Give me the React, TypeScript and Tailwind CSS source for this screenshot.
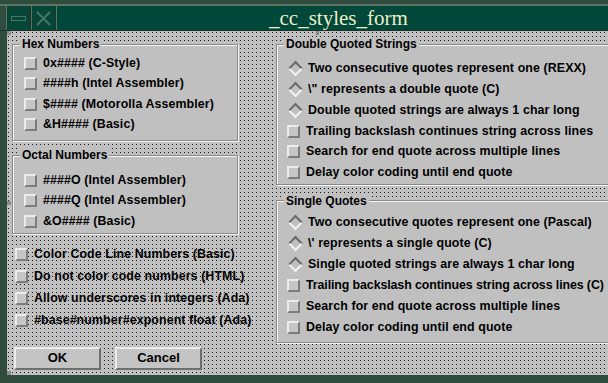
import React from 'react';

const font = { fontFamily: '"Liberation Sans", Arial, sans-serif' };

const Check = () => (
  <span className="block w-[13px] h-[13px] shrink-0 border-2 border-t-[#ececec] border-l-[#ececec] border-r-[#7c7c7c] border-b-[#7c7c7c] bg-[#c6c6c6]" />
);

const Diamond = () => (
  <span className="flex w-[16px] h-[16px] shrink-0 items-center justify-center">
    <span className="block w-[11px] h-[11px] rotate-45 border-2 border-t-[#6a6a6a] border-l-[#6a6a6a] border-r-[#f2f2f2] border-b-[#f2f2f2] bg-[#c0c0c0]" />
  </span>
);

const CheckRow = ({ label, h = 'h-[20.5px]', track = 'tracking-[0.1px]' }: { label: string; h?: string; track?: string }) => (
  <div className={`flex items-center ${h} gap-[6px]`}>
    <Check />
    <span className={`whitespace-nowrap text-[12.4px] ${track}`}>{label}</span>
  </div>
);

const RadioRow = ({ label }: { label: string }) => (
  <div className="flex items-center h-[21px] gap-[5px]">
    <Diamond />
    <span className="whitespace-nowrap text-[12.4px] tracking-[0.1px]">{label}</span>
  </div>
);

const Group = ({ title, className, inner, children }: { title: string; className: string; inner: string; children: React.ReactNode }) => (
  <fieldset className={`border border-[#8a8a8a] bg-[#c0c0c0] shadow-[inset_1px_1px_0_#f4f4f4,1px_1px_0_#f4f4f4] ${className}`}>
    <legend className="ml-[7px] px-[2px] leading-[14px] bg-[#c0c0c0]">{title}</legend>
    <div className={inner}>{children}</div>
  </fieldset>
);

const Button = ({ label }: { label: string }) => (
  <div className="flex w-[87px] h-[23px] items-center justify-center border-2 border-t-[#ececec] border-l-[#ececec] border-r-[#6e6e6e] border-b-[#6e6e6e] bg-[#c4c4c4] text-[13px]">
    {label}
  </div>
);

export default function App() {
  return (
    <div className="w-[608px] h-[383px] overflow-hidden bg-[#2f4c3e] flex flex-col">
      {/* top frame */}
      <div className="h-[6px] shrink-0 border-b-2 border-b-[#5b7567]" />
      {/* title bar */}
      <div className="h-[25px] shrink-0 flex pl-[6px] border-b border-b-[#1d3329]">
        <div className="w-[25px] h-full flex items-center justify-center bg-[#074636] border-r border-r-[#1d3329] border-l border-l-[#5b7567]">
          <div className="w-[15px] h-[5px] border border-[#3f7a66]" />
        </div>
        <div className="w-[25px] h-full flex items-center justify-center bg-[#074636] border-r border-r-[#1d3329] border-l border-l-[#5b7567]">
          <svg width="17" height="17" viewBox="0 0 17 17">
            <path d="M2 2 L15 15 M15 2 L2 15" stroke="#3f7a66" strokeWidth="2" fill="none" />
          </svg>
        </div>
        <div className="flex-1 h-full bg-[#00483a] border-l border-l-[#5b7567] pl-[212px] flex items-center">
          <span className="text-[21px] leading-none text-[#eeeec8] whitespace-nowrap" style={{ fontFamily: '"Liberation Serif", "Times New Roman", serif' }}>
            _cc_styles_form
          </span>
        </div>
      </div>
      {/* body */}
      <div className="flex-1 ml-[7px] mb-[8px] relative overflow-hidden bg-[#c0c0c0] bg-[image:conic-gradient(at_1px_1px,transparent_75%,#1a1a1a_0)] bg-[length:4px_4px] bg-[position:1px_1px] text-[12px] font-bold text-black flex pt-[6px] pl-[5px]" style={font}>
        <span className="absolute left-0 top-0 w-[4px] h-[4px] bg-[#8a8a8a]" />
        <span className="absolute left-[309px] top-0 w-[3px] h-[4px] bg-[#8a8a8a]" />
        <span className="absolute left-0 top-[170px] w-[4px] h-[4px] bg-[#8a8a8a]" />
        <span className="absolute left-0 bottom-0 w-[4px] h-[4px] bg-[#8a8a8a]" />

        {/* left column */}
        <div className="w-[226px] shrink-0 flex flex-col">
          <Group title="Hex Numbers" className="" inner="pl-[11px] pt-[2px] pb-[5px]">
            <CheckRow label="0x#### (C-Style)" />
            <CheckRow label="####h (Intel Assembler)" />
            <CheckRow label="$#### (Motorolla Assembler)" />
            <CheckRow label="&H#### (Basic)" />
          </Group>
          <Group title="Octal Numbers" className="mt-[7px]" inner="pl-[11px] pt-[8px] pb-[1px]">
            <CheckRow label="####O (Intel Assembler)" />
            <CheckRow label="####Q (Intel Assembler)" />
            <CheckRow label="&O#### (Basic)" />
          </Group>
          <div className="mt-[10px] pl-[3px] flex flex-col">
            <CheckRow label="Color Code Line Numbers (Basic)" h="h-[22px]" />
            <CheckRow label="Do not color code numbers (HTML)" h="h-[22px]" />
            <CheckRow label="Allow underscores in integers (Ada)" h="h-[22px]" />
            <CheckRow label="#base#number#exponent float (Ada)" h="h-[22px]" />
          </div>
          <div className="mt-[15px] pl-[2px] flex gap-[14px]">
            <Button label="OK" />
            <Button label="Cancel" />
          </div>
        </div>

        {/* right column */}
        <div className="ml-[38px] w-[360px] shrink-0 flex flex-col">
          <Group title="Double Quoted Strings" className="" inner="pl-[10px] pt-[7px] pb-[1px]">
            <RadioRow label="Two consecutive quotes represent one (REXX)" />
            <RadioRow label={'\\" represents a double quote (C)'} />
            <RadioRow label="Double quoted strings are always 1 char long" />
            <CheckRow label="Trailing backslash continues string across lines" />
            <CheckRow label="Search for end quote across multiple lines" />
            <CheckRow label="Delay color coding until end quote" />
          </Group>
          <Group title="Single Quotes" className="mt-[9px]" inner="pl-[10px] pt-[4px] pb-[4px]">
            <RadioRow label="Two consecutive quotes represent one (Pascal)" />
            <RadioRow label={"\\' represents a single quote (C)"} />
            <RadioRow label="Single quoted strings are always 1 char long" />
            <CheckRow label="Trailing backslash continues string across lines (C)" h="h-[21px]" track="tracking-[-0.1px]" />
            <CheckRow label="Search for end quote across multiple lines" h="h-[21px]" />
            <CheckRow label="Delay color coding until end quote" h="h-[21px]" />
          </Group>
        </div>
      </div>
    </div>
  );
}
